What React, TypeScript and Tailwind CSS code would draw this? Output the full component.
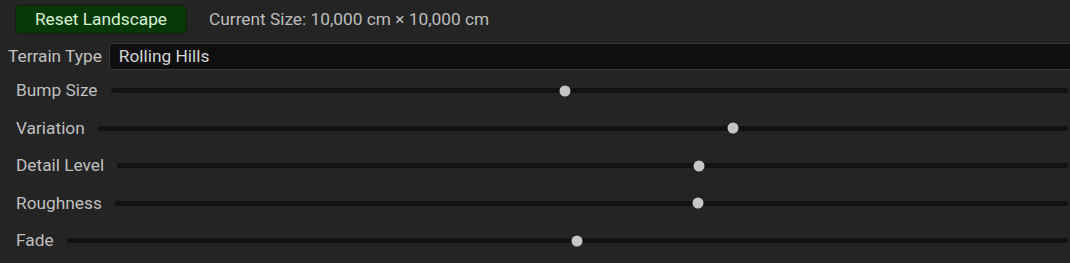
const sliders = [
  { label: "Bump Size", value: 0.475 },
  { label: "Variation", value: 0.6546 },
  { label: "Detail Level", value: 0.612 },
  { label: "Roughness", value: 0.612 },
  { label: "Fade", value: 0.51 },
];

function SliderRow({ label, value }: { label: string; value: number }) {
  return (
    <div className="flex h-[37.5px] items-center gap-[13px] pl-[16px] pr-[2px]">
      <span className="shrink-0 text-[#bfbfbf]">{label}</span>
      <div className="relative h-[5px] flex-1 rounded-full bg-[#121212]">
        <div
          className="absolute top-1/2 h-[11px] w-[11px] -translate-x-1/2 -translate-y-1/2 rounded-full bg-[#c6c6c6]"
          style={{ left: `${value * 100}%` }}
        />
      </div>
    </div>
  );
}

export default function App() {
  return (
    <div className="h-[263px] w-[1070px] overflow-hidden bg-[#242424] font-['Roboto',sans-serif] text-[17.3px] leading-none">
      {/* Header */}
      <div className="flex items-center gap-[22px] pl-[15px] pt-[5px]">
        <button className="h-[29px] w-[172px] rounded-[4px] border border-[#161c16] bg-[#053805] text-[#d8f3d2]">
          Reset Landscape
        </button>
        <span className="text-[#bdbdbd]">Current Size: 10,000 cm × 10,000 cm</span>
      </div>

      {/* Terrain type */}
      <div className="mt-[9px] flex h-[27px] items-center gap-[7px] pl-[8px]">
        <span className="shrink-0 text-[#c0c0c0]">Terrain Type</span>
        <div className="-mr-[10px] flex h-full flex-1 items-center rounded-[3px] border border-[#383838] bg-[#0f0f0f] pl-[9px] text-[#d4d4d4]">
          Rolling Hills
        </div>
      </div>

      {/* Sliders */}
      <div className="mt-[2px]">
        {sliders.map((s) => (
          <SliderRow key={s.label} label={s.label} value={s.value} />
        ))}
      </div>
    </div>
  );
}
